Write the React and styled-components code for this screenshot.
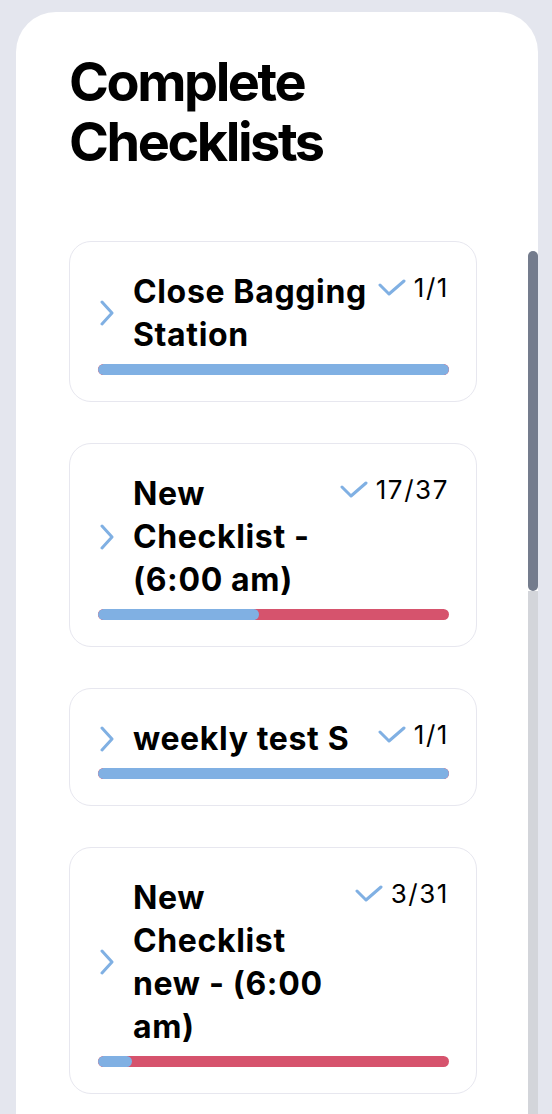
import React from 'react'
import styled, { createGlobalStyle } from 'styled-components'

const GlobalStyle = createGlobalStyle`
    html, body {
        margin: 0;
        height: 100%;
        overflow: hidden;
        background: #e4e6ee;
        font-family: Inter, "Liberation Sans", sans-serif;
        color: #000;
    }
`

const Panel = styled.div`
    margin: 12px 14px 0 16px;
    height: 1200px;
    background: #fff;
    border-radius: 40px 40px 0 0;
    padding-top: 40px;
    box-sizing: border-box;
    display: flex;
    flex-direction: column;
`

const Titulo = styled.h1`
    margin: 0;
    padding: 0 53px;
    font-size: 54px;
    line-height: 60px;
    font-weight: 700;
    letter-spacing: -0.045em;
`

const Corpo = styled.div`
    margin-top: 69px;
    flex: 1;
    display: flex;
    min-height: 0;
`

const Lista = styled.div`
    flex: 1;
    overflow: hidden;
    padding: 0 51px 0 53px;
    display: flex;
    flex-direction: column;
    gap: 41px;
`

const Trilho = styled.div`
    flex: none;
    width: 10px;
    padding-top: 10px;
    display: flex;
    flex-direction: column;
`

const Polegar = styled.div`
    flex: none;
    height: 340px;
    border-radius: 5px;
    background: #747c8d;
`

const RestoTrilho = styled.div`
    flex: 1;
    background: #d3d5da;
`

const Card = styled.div`
    flex: none;
    border: 1px solid #e7e7ef;
    border-radius: 22px;
    padding: 28px 27px 26px 28px;
`

const Cabecalho = styled.div`
    display: flex;
    align-items: center;
`

const Seta = styled.svg`
    flex: none;
    width: 14px;
    height: 26px;
    margin: 0 19px 0 2px;
`

const Nome = styled.div`
    flex: 1;
    font-size: 32px;
    line-height: 43px;
    font-weight: 700;
    letter-spacing: 0.02em;
`

const Contagem = styled.div`
    flex: none;
    align-self: flex-start;
    display: flex;
    align-items: center;
    gap: 8px;
    font-size: 26px;
    line-height: 43px;
    font-weight: 400;
    letter-spacing: 0.06em;
    margin-top: -4px;
`

const Check = styled.svg`
    width: 28px;
    height: 18px;
`

const Barra = styled.div`
    margin-top: 8px;
    height: 11px;
    border-radius: 6px;
    background: #d6536d;
    overflow: hidden;
`

const Preenchido = styled.div`
    height: 100%;
    border-radius: 6px;
    background: #80b0e3;
`

const checklists = [
    { id: 1, nome: 'Close Bagging Station', feitos: 1, total: 1 },
    { id: 2, nome: 'New Checklist - (6:00 am)', feitos: 17, total: 37 },
    { id: 3, nome: 'weekly test S', feitos: 1, total: 1 },
    { id: 4, nome: 'New Checklist new - (6:00 am)', feitos: 3, total: 31 },
]

class App extends React.Component {

    render() {
        return (
            <>
                <GlobalStyle />
                <Panel>
                    <Titulo>Complete Checklists</Titulo>
                    <Corpo>
                        <Lista>
                            {checklists.map(item => (
                                <Card key={item.id}>
                                    <Cabecalho>
                                        <Seta viewBox="0 0 14 26" fill="none" stroke="#80b0e3" strokeWidth="3" strokeLinecap="round" strokeLinejoin="round">
                                            <polyline points="2,2 12,13 2,24" />
                                        </Seta>
                                        <Nome>{item.nome}</Nome>
                                        <Contagem>
                                            <Check viewBox="0 0 28 18" fill="none" stroke="#80b0e3" strokeWidth="3" strokeLinecap="round" strokeLinejoin="round">
                                                <polyline points="2,6 11,15 26,2" />
                                            </Check>
                                            {item.feitos}/{item.total}
                                        </Contagem>
                                    </Cabecalho>
                                    <Barra>
                                        {/* largura calculada a partir dos dados */}
                                        <Preenchido style={{ width: `${(item.feitos / item.total) * 100}%` }} />
                                    </Barra>
                                </Card>
                            ))}
                        </Lista>
                        {/* barra de rolagem desenhada, o navegador headless esconde a nativa */}
                        <Trilho>
                            <Polegar />
                            <RestoTrilho />
                        </Trilho>
                    </Corpo>
                </Panel>
            </>
        )
    }
}

export default App
